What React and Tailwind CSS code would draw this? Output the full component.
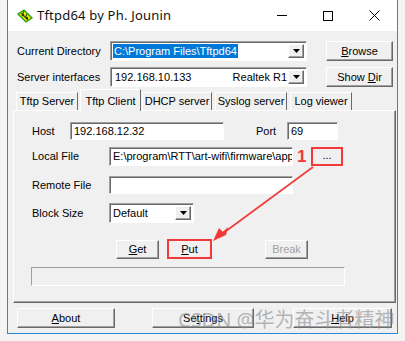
import React from "react";

const sunken =
  "bg-white border border-t-[#a0a0a0] border-l-[#a0a0a0] border-b-white border-r-white shadow-[inset_1px_1px_0_#696969]";
const raised =
  "bg-[#f0f0f0] border border-t-white border-l-white border-b-[#696969] border-r-[#696969] shadow-[inset_-1px_-1px_0_#a0a0a0]";

function DropBtn() {
  return (
    <div className={`w-[16px] h-full flex items-center justify-center ${raised}`}>
      <svg width="7" height="4" viewBox="0 0 7 4">
        <path d="M0 0h7L3.5 4z" fill="#000" />
      </svg>
    </div>
  );
}

function Btn({ children, className = "" }) {
  return <div className={`flex items-center justify-center ${raised} ${className}`}>{children}</div>;
}

function Tab({ label, active, className = "" }) {
  if (active)
    return (
      <div className={`h-[22px] flex justify-center pt-[3px] bg-[#f0f0f0] border-t border-l border-t-white border-l-white border-r border-r-[#696969] relative z-10 -mb-px ${className}`}>
        {label}
      </div>
    );
  return (
    <div className={`h-[18px] mt-[4px] flex items-center justify-center bg-[#f0f0f0] border-t border-l border-t-white border-l-white border-r border-r-[#696969] ${className}`}>
      {label}
    </div>
  );
}

export default function App() {
  return (
    <div
      className="relative w-[405px] h-[341px] bg-[#f4f4f4] overflow-hidden text-[11px] text-black"
      style={{ fontFamily: '"Liberation Sans", Arial, sans-serif' }}
    >
      <div className="ml-[7px] w-[391px] h-[334px] border-x border-b border-[#2c88d9] flex flex-col bg-[#f0f0f0]">
        {/* title bar */}
        <div className="h-[31px] bg-white flex items-center pl-[8px]" style={{ fontFamily: '"Noto Sans", sans-serif' }}>
          <svg width="18" height="16" viewBox="0 0 18 16">
            <path d="M2 6l6-4 8 8-6 4z" fill="#ffe600" stroke="#1a9a1a" strokeWidth="1.3" />
            <path d="M5 5l7 7M8 3l-2 5M11 6l-2 4" stroke="#1b6a1b" strokeWidth="1.2" />
            <circle cx="7" cy="7" r="1.2" fill="#333" />
            <circle cx="11" cy="10" r="1.2" fill="#333" />
          </svg>
          <span className="ml-[3px] text-[13px] tracking-[0.2px] text-[#111]">Tftpd64 by Ph. Jounin</span>
          <div className="ml-auto flex items-center h-full">
            <div className="w-[46px] flex justify-center">
              <div className="w-[10px] h-px bg-black" />
            </div>
            <div className="w-[46px] flex justify-center">
              <div className="w-[10px] h-[10px] border border-black" />
            </div>
            <div className="w-[46px] flex justify-center">
              <svg width="11" height="11" viewBox="0 0 11 11">
                <path d="M0.5 0.5l10 10M10.5 0.5l-10 10" stroke="#000" strokeWidth="1" />
              </svg>
            </div>
          </div>
        </div>

        {/* body */}
        <div className="flex-1 flex flex-col">
          <div className="mt-[10px] h-[20px] flex items-center">
            <span className="ml-[9px] w-[93px]">Current Directory</span>
            <div className={`w-[197px] h-[20px] flex items-center p-[2px] ${sunken}`}>
              <div className="flex-1 flex items-center h-full">
                <span className="bg-[#0078d7] text-white px-px leading-[14px]">C:\Program Files\Tftpd64</span>
              </div>
              <DropBtn />
            </div>
            <Btn className="ml-[19px] w-[67px] h-[20px]">
              <span><u>B</u>rowse</span>
            </Btn>
          </div>
          <div className="mt-[6px] h-[20px] flex items-center">
            <span className="ml-[9px] w-[93px]">Server interfaces</span>
            <div className={`w-[197px] h-[20px] flex items-center p-[2px] ${sunken}`}>
              <span className="ml-[2px]">192.168.10.133</span>
              <span className="ml-auto mr-[1px]">Realtek R1</span>
              <DropBtn />
            </div>
            <Btn className="ml-[19px] w-[67px] h-[20px]">
              <span>Show <u>D</u>ir</span>
            </Btn>
          </div>

          {/* tabs */}
          <div className="mt-px ml-[8px] flex items-end h-[22px]">
            <Tab label="Tftp Server" className="w-[62px]" />
            <Tab label="Tftp Client" active className="ml-[2px] w-[61px]" />
            <Tab label="DHCP server" className="ml-px w-[70px]" />
            <Tab label="Syslog server" className="ml-[3px] w-[72px]" />
            <Tab label="Log viewer" className="ml-[3px] w-[62px]" />
          </div>

          {/* panel */}
          <div className="ml-[5px] w-[383px] h-[193px] border border-t-white border-l-white border-b-[#696969] border-r-[#696969] shadow-[inset_-1px_-1px_0_#a0a0a0] flex flex-col">
            <div className="mt-[11px] h-[18px] flex items-center">
              <span className="ml-[18px] w-[38px]">Host</span>
              <div className={`w-[154px] h-[18px] flex items-center pl-[3px] ${sunken}`}>192.168.12.32</div>
              <span className="ml-[32px] w-[31px]">Port</span>
              <div className={`w-[51px] h-[18px] flex items-center pl-[3px] ${sunken}`}>69</div>
            </div>
            <div className="mt-[7px] h-[19px] flex items-center">
              <span className="ml-[18px] w-[77px]">Local File</span>
              <div className={`w-[184px] h-[19px] flex items-center pl-[3px] overflow-hidden whitespace-nowrap ${sunken}`}>
                E:\program\RTT\art-wifi\firmware\app
              </div>
              <span className="ml-[4px] w-[14px] text-[#f23a3a] text-[17px] font-bold leading-none">1</span>
              <div className="w-[32px] h-[19px] border-2 border-[#f23a3a] flex items-center justify-center">
                <span className="leading-none -mt-[3px]">...</span>
              </div>
            </div>
            <div className="mt-[10px] h-[18px] flex items-center">
              <span className="ml-[18px] w-[77px]">Remote File</span>
              <div className={`w-[184px] h-[18px] ${sunken}`} />
            </div>
            <div className="mt-[9px] h-[20px] flex items-center">
              <span className="ml-[18px] w-[77px]">Block Size</span>
              <div className={`w-[85px] h-[20px] flex items-center p-[2px] ${sunken}`}>
                <span className="flex-1 pl-px">Default</span>
                <DropBtn />
              </div>
            </div>
            <div className="mt-[16px] h-[20px] flex items-center">
              <Btn className="ml-[102px] w-[43px] h-[19px]">
                <span><u>G</u>et</span>
              </Btn>
              <div className="ml-[8px] w-[45px] h-[20px] border-2 border-[#f23a3a] flex items-center justify-center">
                <span><u>P</u>ut</span>
              </div>
              <Btn className="ml-[53px] w-[43px] h-[19px] text-[#a0a0a0]">
                <span>Break</span>
              </Btn>
            </div>
            <div className="mt-[8px] ml-[17px] w-[314px] h-[19px] border border-t-[#a0a0a0] border-l-[#a0a0a0] border-b-white border-r-white" />
          </div>

          {/* bottom buttons */}
          <div className="mt-[5px] h-[20px] flex items-center">
            <Btn className="ml-[9px] w-[98px] h-[20px]">
              <span><u>A</u>bout</span>
            </Btn>
            <Btn className="ml-[37px] w-[102px] h-[20px]">
              <span>Se<u>t</u>tings</span>
            </Btn>
            <Btn className="ml-[39px] w-[99px] h-[20px]">
              <span><u>H</u>elp</span>
            </Btn>
          </div>
        </div>
      </div>

      {/* annotation arrow */}
      <svg className="absolute left-0 top-0 pointer-events-none" width="405" height="341">
        <line x1="313" y1="167" x2="222" y2="234" stroke="#f23a3a" strokeWidth="1.6" />
        <path d="M213 241l15-14-2 8z" fill="#f23a3a" />
        <path d="M213 241l6-13 5 5z" fill="#f23a3a" />
      </svg>

      {/* watermark */}
      <div
        className="absolute left-[178px] top-[305px] text-[20px] text-[#8a8a8a]/60 whitespace-nowrap pointer-events-none"
        style={{ fontFamily: '"Noto Sans", "Noto Sans CJK SC", sans-serif' }}
      >
        CSDN @华为奋斗者精神
      </div>
    </div>
  );
}
